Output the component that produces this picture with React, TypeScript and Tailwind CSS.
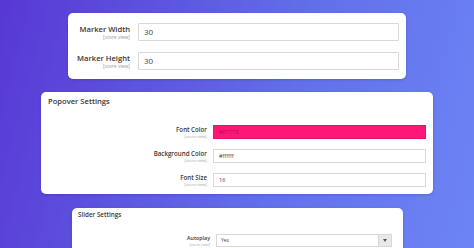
export default function App() {
  const font = { fontFamily: '"Open Sans", "Liberation Sans", sans-serif' };
  return (
    <div
      className="w-[474px] h-[248px] overflow-hidden bg-[linear-gradient(105deg,#5837d4_0%,#6271ea_60%,#6c84f5_100%)] pt-[13px] flex flex-col"
      style={font}
    >
      {/* Card 1 */}
      <div className="ml-[68px] w-[338px] h-[66px] bg-white rounded-[5px] pt-[10px] pr-[7px] flex flex-col gap-[11px] shrink-0 shadow-[0_1px_3px_rgba(0,0,0,0.15)]">
        {["Marker Width", "Marker Height"].map((l) => (
          <div key={l} className="flex items-center h-[18px]">
            <div className="w-[62px] text-right flex flex-col items-end">
              <span className="text-[7.6px] leading-[10px] font-semibold text-[#41362f] whitespace-nowrap">{l}</span>
              <span className="text-[5px] leading-[7px] text-[#999] whitespace-nowrap">[store view]</span>
            </div>
            <div className="ml-[8px] flex-1 h-[18px] border border-[#d8d8d8] rounded-[1px] flex items-center pl-[5px] text-[8px] text-[#444]">
              30
            </div>
          </div>
        ))}
      </div>

      {/* Card 2 */}
      <div className="mt-[13px] ml-[41px] w-[392px] h-[102px] bg-white rounded-[5px] pt-[4px] px-[7px] flex flex-col shrink-0 shadow-[0_1px_3px_rgba(0,0,0,0.15)]">
        <div className="text-[7.6px] leading-[10px] font-semibold text-[#41362f]">Popover Settings</div>
        <div className="mt-[19px] flex flex-col gap-[10px]">
          {[
            { l: "Font Color", v: "#ff1778", pink: true },
            { l: "Background Color", v: "#ffffff", pink: false },
            { l: "Font Size", v: "16", pink: false },
          ].map((r) => (
            <div key={r.l} className="flex items-center h-[14px]">
              <div className="w-[159px] flex flex-col items-end">
                <span className="text-[6.2px] leading-[8px] font-semibold text-[#41362f] whitespace-nowrap">{r.l}</span>
                <span className="text-[4.2px] leading-[5px] text-[#aaa] whitespace-nowrap">[store view]</span>
              </div>
              <div
                className={
                  r.pink
                    ? "ml-[6px] flex-1 h-[14px] bg-[#ff1778] border border-[#e5176c] flex items-center pl-[5px] text-[5.5px] text-[#b0104f]"
                    : "ml-[6px] flex-1 h-[14px] border border-[#d8d8d8] flex items-center pl-[5px] text-[5.5px] text-[#444]"
                }
              >
                {r.v}
              </div>
            </div>
          ))}
        </div>
      </div>

      {/* Card 3 */}
      <div className="mt-[14px] ml-[72px] w-[331px] h-[60px] bg-white rounded-[5px] pt-[3px] pl-[6px] pr-[11px] flex flex-col shrink-0 shadow-[0_1px_3px_rgba(0,0,0,0.15)]">
        <div className="text-[6.3px] leading-[8px] font-semibold text-[#41362f]">Slider Settings</div>
        <div className="mt-[15px] flex items-center h-[13px]">
          <div className="w-[132px] flex flex-col items-end">
            <span className="text-[5.3px] leading-[7px] font-semibold text-[#41362f] whitespace-nowrap">Autoplay</span>
            <span className="text-[3.8px] leading-[5px] text-[#aaa] whitespace-nowrap">[store view]</span>
          </div>
          <div className="ml-[6px] flex-1 h-[13px] border border-[#d8d8d8] flex items-center text-[5px] text-[#444]">
            <span className="flex-1 pl-[4px]">Yes</span>
            <div className="w-[13px] h-full bg-[#e9e9e9] border-l border-[#d8d8d8] flex items-center justify-center">
              <svg width="4" height="3" viewBox="0 0 4 3"><path d="M0 0 L4 0 L2 3 Z" fill="#555" /></svg>
            </div>
          </div>
        </div>
      </div>
    </div>
  );
}
